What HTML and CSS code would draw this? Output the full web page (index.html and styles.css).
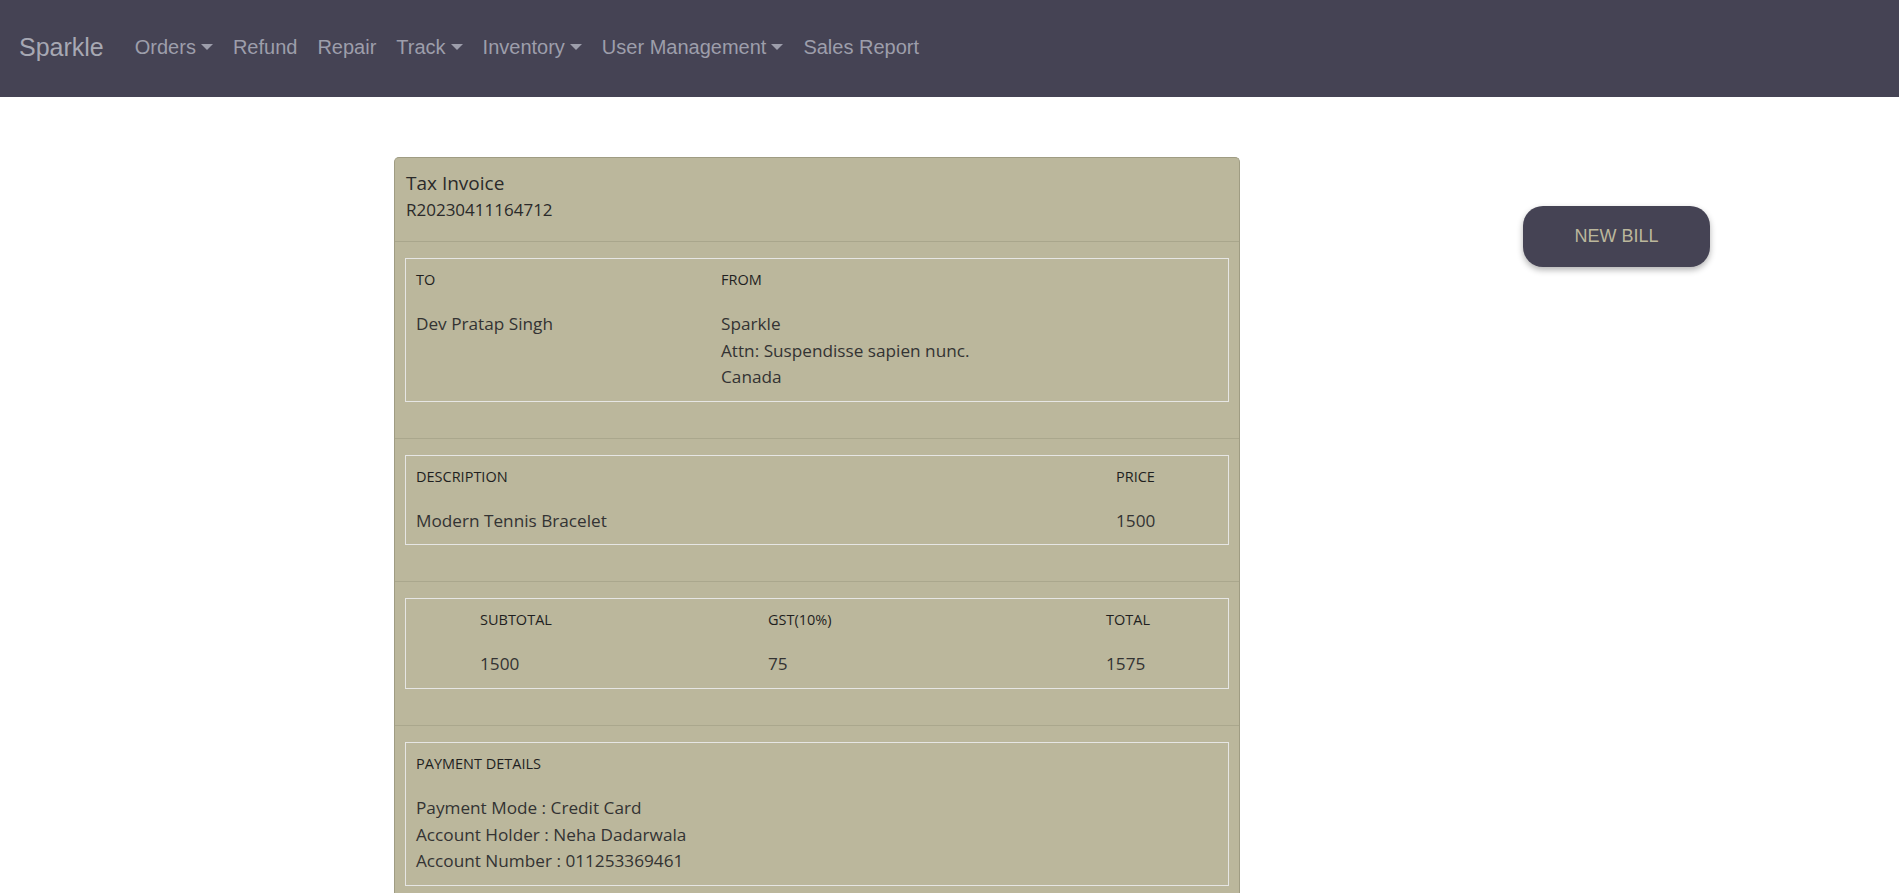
FILE: index.html
```html
<!DOCTYPE html>
<html lang="en">
<head>
<meta charset="utf-8">
<title>Sparkle - Tax Invoice</title>
<link rel="stylesheet" href="styles.css">
</head>
<body>
<nav class="navbar">
  <a class="brand" href="#">Sparkle</a>
  <ul class="nav-links">
    <li><a class="nav-link dropdown" href="#">Orders</a></li>
    <li><a class="nav-link" href="#">Refund</a></li>
    <li><a class="nav-link" href="#">Repair</a></li>
    <li><a class="nav-link dropdown" href="#">Track</a></li>
    <li><a class="nav-link dropdown" href="#">Inventory</a></li>
    <li><a class="nav-link dropdown" href="#">User Management</a></li>
    <li><a class="nav-link" href="#">Sales Report</a></li>
  </ul>
</nav>

<main class="page">
  <section class="invoice">
    <header class="invoice-head">
      <div class="invoice-title">Tax Invoice</div>
      <div class="invoice-id">R20230411164712</div>
    </header>

    <div class="invoice-section">
      <div class="box parties">
        <div class="col col-to">
          <div class="label">TO</div>
          <div class="value">Dev Pratap Singh</div>
        </div>
        <div class="col">
          <div class="label">FROM</div>
          <div class="value">Sparkle</div>
          <div class="value">Attn: Suspendisse sapien nunc.</div>
          <div class="value">Canada</div>
        </div>
      </div>
    </div>

    <div class="invoice-section">
      <div class="box items">
        <div class="col col-desc">
          <div class="label">DESCRIPTION</div>
          <div class="value">Modern Tennis Bracelet</div>
        </div>
        <div class="col">
          <div class="label">PRICE</div>
          <div class="value">1500</div>
        </div>
      </div>
    </div>

    <div class="invoice-section">
      <div class="box totals">
        <div class="col col-sub">
          <div class="label">SUBTOTAL</div>
          <div class="value">1500</div>
        </div>
        <div class="col col-gst">
          <div class="label">GST(10%)</div>
          <div class="value">75</div>
        </div>
        <div class="col">
          <div class="label">TOTAL</div>
          <div class="value">1575</div>
        </div>
      </div>
    </div>

    <div class="invoice-section">
      <div class="box payment">
        <div class="col">
          <div class="label">PAYMENT DETAILS</div>
          <div class="value">Payment Mode : Credit Card</div>
          <div class="value">Account Holder : Neha Dadarwala</div>
          <div class="value">Account Number : 011253369461</div>
        </div>
      </div>
    </div>
  </section>

  <aside class="actions">
    <button class="btn-new" type="button">NEW BILL</button>
  </aside>
</main>
</body>
</html>
```

FILE: styles.css
```css
* {
  box-sizing: border-box;
}

html, body {
  margin: 0;
  padding: 0;
  background: #ffffff;
}

body {
  font-family: "Open Sans", "Liberation Sans", sans-serif;
  color: #333333;
}

/* Navbar */
.navbar {
  display: flex;
  align-items: center;
  height: 97px;
  padding: 0 19px 2px;
  background: #454354;
  font-family: "Liberation Sans", Arial, sans-serif;
}

.brand {
  font-size: 25px;
  color: #a7a8b3;
  text-decoration: none;
  margin-right: 21px;
}

.nav-links {
  display: flex;
  list-style: none;
  margin: 0;
  padding: 0;
}

.nav-link {
  display: block;
  padding: 0 10px;
  font-size: 20px;
  color: #9d9eab;
  text-decoration: none;
}

.nav-link.dropdown::after {
  content: "";
  display: inline-block;
  margin-left: 5px;
  vertical-align: 4px;
  border-top: 6px solid #9d9eab;
  border-left: 6px solid transparent;
  border-right: 6px solid transparent;
}

/* Page layout */
.page {
  display: flex;
  align-items: flex-start;
  padding: 60px 0 0 394px;
}

.invoice {
  width: 846px;
  flex: none;
  background: #bbb79c;
  border: 1px solid #9f9c83;
  border-bottom: none;
  border-radius: 5px 5px 0 0;
}

.invoice-head {
  padding: 12px 11px 17px;
  border-bottom: 1px solid #a9a68c;
  color: #2a2a2a;
}

.invoice-title {
  font-size: 19px;
  line-height: 26px;
}

.invoice-id {
  font-size: 17px;
  line-height: 28px;
}

.invoice-section {
  padding: 16px 10px 36px;
  border-bottom: 1px solid #aaa78d;
}

.invoice-section:last-child {
  border-bottom: none;
  padding-bottom: 40px;
}

.box {
  display: flex;
  border: 1px solid #e6e6e4;
  padding: 10px 10px;
}

.label {
  font-size: 14.5px;
  line-height: 22px;
  color: #1f1f1f;
  margin-bottom: 20px;
}

.value {
  font-size: 17.2px;
  line-height: 26.6px;
  color: #333333;
}

.col-to {
  width: 305px;
}

.col-desc {
  width: 700px;
}

.totals {
  padding-left: 74px;
}

.col-sub {
  width: 288px;
}

.col-gst {
  width: 338px;
}

/* Actions */
.actions {
  margin-left: 283px;
  padding-top: 49px;
}

.btn-new {
  width: 187px;
  height: 61px;
  border: none;
  border-radius: 20px;
  background: #454354;
  color: #bbb79c;
  font-family: "Liberation Sans", Arial, sans-serif;
  font-size: 18px;
  box-shadow: 0 3px 6px rgba(0, 0, 0, 0.3);
  cursor: pointer;
}
```
